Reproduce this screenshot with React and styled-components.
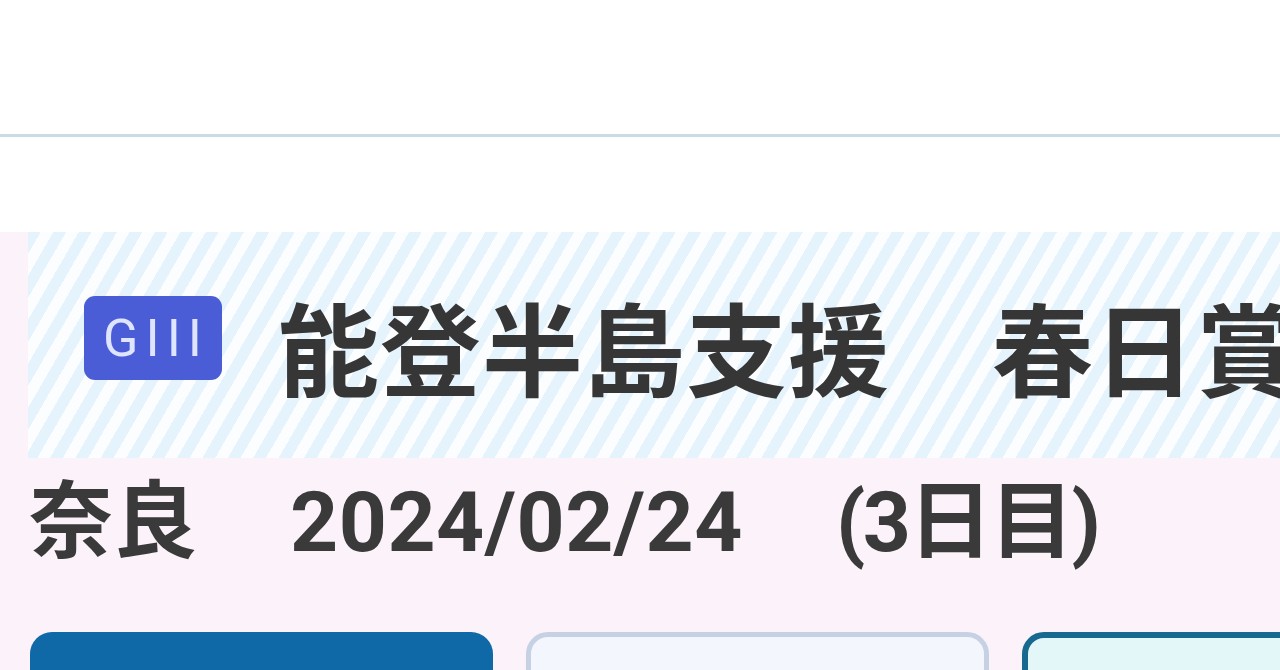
import React from "react";
import styled, { createGlobalStyle } from "styled-components";

const Global = createGlobalStyle`
  html, body { margin: 0; padding: 0; background: #ffffff; }
  body { overflow: hidden; font-family: Roboto, "Noto Sans CJK JP", sans-serif; }
  #root { width: 1280px; height: 670px; overflow: hidden; }
`;

const Page = styled.div`
  width: 1280px;
  height: 670px;
  display: flex;
  flex-direction: column;
  background: #ffffff;
`;

const Header = styled.header`
  height: 134px;
  flex: none;
  background: #ffffff;
  border-bottom: 3px solid #c8dce4;
`;

const Spacer = styled.div`
  height: 95px;
  flex: none;
`;

const RaceSection = styled.section`
  flex: 1;
  background: #fcf2fa;
  padding-left: 28px;
  display: flex;
  flex-direction: column;
  overflow: hidden;
`;

const TitleBand = styled.div`
  height: 226px;
  flex: none;
  display: flex;
  align-items: center;
  gap: 56px;
  padding-left: 56px;
  white-space: nowrap;
  overflow: hidden;
  background: repeating-linear-gradient(
    120deg,
    #e5f4fc 0px,
    #e5f4fc 11px,
    #fbfdff 11px,
    #fbfdff 22px
  );
`;

const GradeBadge = styled.span`
  flex: none;
  width: 138px;
  height: 84px;
  border-radius: 11px;
  background: #4a5dd6;
  color: #dfe4ff;
  font-family: Roboto, sans-serif;
  font-weight: 400;
  font-size: 52px;
  letter-spacing: 7px;
  display: flex;
  align-items: center;
  justify-content: center;
  padding-left: 6px;
  box-sizing: border-box;
  margin-top: -14px;
`;

const RaceTitle = styled.h1`
  margin: 0;
  font-family: "Noto Sans CJK JP", sans-serif;
  font-weight: 700;
  font-size: 101px;
  letter-spacing: 1px;
  line-height: 1;
  color: #363636;
`;

const InfoRow = styled.div`
  margin-top: 20px;
  height: 154px;
  flex: none;
  display: flex;
  align-items: flex-start;
  gap: 93px;
  padding-left: 1px;
  font-family: Roboto, "Noto Sans CJK JP", sans-serif;
  font-weight: 700;
  font-size: 84px;
  line-height: 90px;
  color: #3a3a3a;
  white-space: nowrap;
`;

const InfoItem = styled.span`
  flex: none;
  letter-spacing: ${(p) => p.$spacing || "0px"};
`;

const ButtonRow = styled.div`
  display: flex;
  gap: 33px;
  margin-left: 2px;
`;

const TabButton = styled.div`
  flex: none;
  width: 463px;
  height: 140px;
  border-radius: 22px;
  box-sizing: border-box;
  background: ${(p) => p.$bg};
  border: ${(p) => p.$border};
`;

export default function App() {
  return (
    <>
      <Global />
      <Page>
        <Header />
        <Spacer />
        <RaceSection>
          <TitleBand>
            <GradeBadge>GIII</GradeBadge>
            <RaceTitle>能登半島支援　春日賞</RaceTitle>
          </TitleBand>
          <InfoRow>
            <InfoItem>奈良</InfoItem>
            <InfoItem $spacing="0.5px">2024/02/24</InfoItem>
            <InfoItem $spacing="-2.5px">(3日目)</InfoItem>
          </InfoRow>
          <ButtonRow>
            <TabButton $bg="#0f69a7" $border="none" />
            <TabButton $bg="#f3f6fd" $border="5px solid #c6d2e4" />
            <TabButton $bg="#e3f7f9" $border="6px solid #17698f" />
          </ButtonRow>
        </RaceSection>
      </Page>
    </>
  );
}
